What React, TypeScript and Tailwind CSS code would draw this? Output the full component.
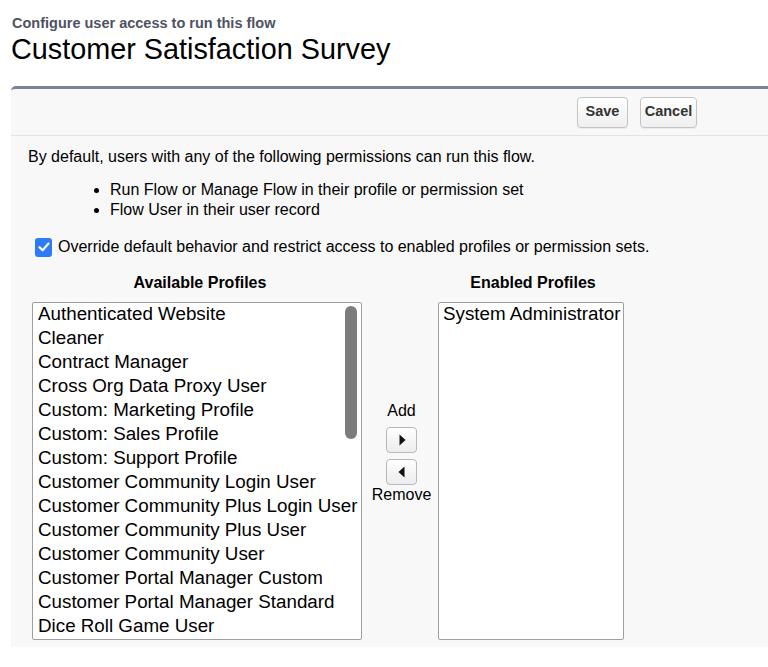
import React from "react";

const available = [
  "Authenticated Website",
  "Cleaner",
  "Contract Manager",
  "Cross Org Data Proxy User",
  "Custom: Marketing Profile",
  "Custom: Sales Profile",
  "Custom: Support Profile",
  "Customer Community Login User",
  "Customer Community Plus Login User",
  "Customer Community Plus User",
  "Customer Community User",
  "Customer Portal Manager Custom",
  "Customer Portal Manager Standard",
  "Dice Roll Game User",
];

function Btn({ children, w }: { children: React.ReactNode; w: string }) {
  return (
    <button className={`${w} h-[31px] rounded-[4px] border border-[#c4c4c4] bg-gradient-to-b from-white to-[#efefef] text-[14.5px] font-bold text-[#333] shadow-[0_1px_1px_rgba(0,0,0,0.06)] flex items-center justify-center`}>
      {children}
    </button>
  );
}

function ArrowBtn({ dir }: { dir: "right" | "left" }) {
  return (
    <button className="w-[31px] h-[26px] rounded-[4px] border border-[#b8b8b8] bg-gradient-to-b from-white to-[#ececec] flex items-center justify-center">
      <svg width="8" height="12" viewBox="0 0 8 12">
        {dir === "right" ? (
          <polygon points="1.5,0.5 7.5,6 1.5,11.5" fill="#111" />
        ) : (
          <polygon points="6.5,0.5 0.5,6 6.5,11.5" fill="#111" />
        )}
      </svg>
    </button>
  );
}

export default function App() {
  return (
    <div className="w-[768px] h-[667px] bg-white overflow-hidden font-['Liberation_Sans',Arial,Helvetica,sans-serif] text-black pl-[11px] pt-[15px]">
      <div className="text-[14.5px] leading-[17px] font-bold text-[#4e5261] pl-px">
        Configure user access to run this flow
      </div>
      <h1 className="text-[28.8px] leading-[32px] mt-[1px]">Customer Satisfaction Survey</h1>
      <div className="mt-[21px] border-t-[3px] border-[#7a8397] rounded-tl-[5px] bg-[#f8f8f8] h-[561px]">
        <div className="h-[47px] border-b border-[#e3e3e3] flex items-center justify-end gap-[12px] pr-[71px]">
          <Btn w="w-[51px]">Save</Btn>
          <Btn w="w-[57px]">Cancel</Btn>
        </div>
        <div className="pl-[17px] pt-[11px] text-[16px] leading-[20px]">
          <p>By default, users with any of the following permissions can run this flow.</p>
          <ul className="mt-[13px] pl-[82px] list-disc leading-[20px]">
            <li>Run Flow or Manage Flow in their profile or permission set</li>
            <li>Flow User in their user record</li>
          </ul>
          <label className="mt-[17px] flex items-center gap-[6px] ml-[7px]">
            <span className="w-[17px] h-[19px] rounded-[3px] bg-[#2f7bf5] flex items-center justify-center">
              <svg width="12" height="10" viewBox="0 0 12 10">
                <polyline points="1.5,5.2 4.6,8.2 10.5,1.5" fill="none" stroke="white" strokeWidth="2.2" strokeLinecap="round" strokeLinejoin="round" />
              </svg>
            </span>
            <span>Override default behavior and restrict access to enabled profiles or permission sets.</span>
          </label>
          <div className="mt-[16px] flex pl-[4px]">
            <div className="w-[330px] flex flex-col">
              <div className="text-center font-bold leading-[20px] pl-[6px]">Available Profiles</div>
              <div className="relative mt-[9px] h-[338px] bg-white border border-[#9f9f9f] rounded-[2px] overflow-hidden pl-[5px] text-[18.8px] leading-[24px]">
                <div className="-mt-px">
                  {available.map((a) => (
                    <div key={a} className="whitespace-nowrap">{a}</div>
                  ))}
                </div>
                <div className="absolute right-[4px] top-[3px] w-[12px] h-[133px] rounded-full bg-[#7c7c7c]" />
              </div>
            </div>
            <div className="w-[76px] flex flex-col items-center pt-[128px] pl-[3px]">
              <div className="leading-[20px]">Add</div>
              <div className="mt-[6px]"><ArrowBtn dir="right" /></div>
              <div className="mt-[6px]"><ArrowBtn dir="left" /></div>
              <div className="leading-[20px]">Remove</div>
            </div>
            <div className="w-[186px] flex flex-col">
              <div className="text-center font-bold leading-[20px] pl-[4px]">Enabled Profiles</div>
              <div className="mt-[9px] h-[338px] bg-white border border-[#9f9f9f] rounded-[2px] pl-[4px] text-[18.8px] leading-[24px]">
                <div className="whitespace-nowrap -mt-px">System Administrator</div>
              </div>
            </div>
          </div>
        </div>
      </div>
    </div>
  );
}
